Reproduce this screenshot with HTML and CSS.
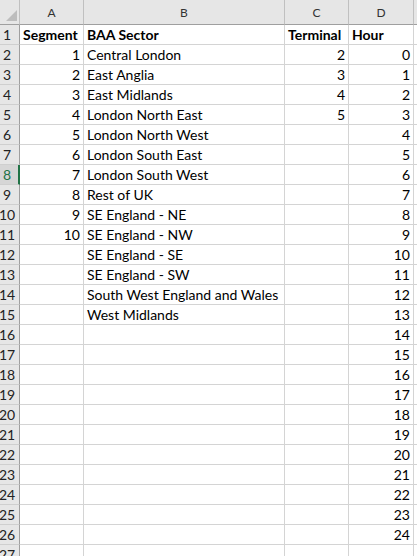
FILE: index.html
```html
<!DOCTYPE html>
<html lang="en">
<head>
    <meta charset="UTF-8">
    <meta name="viewport" content="width=device-width, initial-scale=1.0">
    <title>BAA Sector lookup</title>
    <link rel="stylesheet" href="styles.css">
</head>
<body>

    <table class="sheet">
        <colgroup>
            <col class="c-row">
            <col class="c-a">
            <col class="c-b">
            <col class="c-c">
            <col class="c-d">
            <col class="c-e">
        </colgroup>
        <tr class="col-heads">
            <th class="corner"><span class="tri"></span></th>
            <th>A</th>
            <th>B</th>
            <th>C</th>
            <th>D</th>
            <th class="last"></th>
        </tr>
        <tr class="head-row"><th><span>1</span></th><td>Segment</td><td>BAA Sector</td><td>Terminal</td><td>Hour</td><td></td></tr>
        <tr><th><span>2</span></th><td class="num">1</td><td>Central London</td><td class="num">2</td><td class="num">0</td><td></td></tr>
        <tr><th><span>3</span></th><td class="num">2</td><td>East Anglia</td><td class="num">3</td><td class="num">1</td><td></td></tr>
        <tr><th><span>4</span></th><td class="num">3</td><td>East Midlands</td><td class="num">4</td><td class="num">2</td><td></td></tr>
        <tr><th><span>5</span></th><td class="num">4</td><td>London North East</td><td class="num">5</td><td class="num">3</td><td></td></tr>
        <tr><th><span>6</span></th><td class="num">5</td><td>London North West</td><td></td><td class="num">4</td><td></td></tr>
        <tr><th><span>7</span></th><td class="num">6</td><td>London South East</td><td></td><td class="num">5</td><td></td></tr>
        <tr class="selected"><th><span>8</span></th><td class="num">7</td><td>London South West</td><td></td><td class="num">6</td><td></td></tr>
        <tr><th><span>9</span></th><td class="num">8</td><td>Rest of UK</td><td></td><td class="num">7</td><td></td></tr>
        <tr><th><span>10</span></th><td class="num">9</td><td>SE England - NE</td><td></td><td class="num">8</td><td></td></tr>
        <tr><th><span>11</span></th><td class="num">10</td><td>SE England - NW</td><td></td><td class="num">9</td><td></td></tr>
        <tr><th><span>12</span></th><td></td><td>SE England - SE</td><td></td><td class="num">10</td><td></td></tr>
        <tr><th><span>13</span></th><td></td><td>SE England - SW</td><td></td><td class="num">11</td><td></td></tr>
        <tr><th><span>14</span></th><td></td><td>South West England and Wales</td><td></td><td class="num">12</td><td></td></tr>
        <tr><th><span>15</span></th><td></td><td>West Midlands</td><td></td><td class="num">13</td><td></td></tr>
        <tr><th><span>16</span></th><td></td><td></td><td></td><td class="num">14</td><td></td></tr>
        <tr><th><span>17</span></th><td></td><td></td><td></td><td class="num">15</td><td></td></tr>
        <tr><th><span>18</span></th><td></td><td></td><td></td><td class="num">16</td><td></td></tr>
        <tr><th><span>19</span></th><td></td><td></td><td></td><td class="num">17</td><td></td></tr>
        <tr><th><span>20</span></th><td></td><td></td><td></td><td class="num">18</td><td></td></tr>
        <tr><th><span>21</span></th><td></td><td></td><td></td><td class="num">19</td><td></td></tr>
        <tr><th><span>22</span></th><td></td><td></td><td></td><td class="num">20</td><td></td></tr>
        <tr><th><span>23</span></th><td></td><td></td><td></td><td class="num">21</td><td></td></tr>
        <tr><th><span>24</span></th><td></td><td></td><td></td><td class="num">22</td><td></td></tr>
        <tr><th><span>25</span></th><td></td><td></td><td></td><td class="num">23</td><td></td></tr>
        <tr><th><span>26</span></th><td></td><td></td><td></td><td class="num">24</td><td></td></tr>
        <tr><th><span>27</span></th><td></td><td></td><td></td><td></td><td></td></tr>
    </table>

</body>
</html>
```

FILE: styles.css
```css
body {
    margin: 0;
    background-color: #fff;
    font-family: Lato, "Liberation Sans", sans-serif;
    overflow: hidden;
}

.sheet {
    table-layout: fixed;
    border-collapse: separate;
    border-spacing: 0;
    width: 417px;
    font-size: 14px;
    color: #000;
}

.c-row { width: 20px; }
.c-a   { width: 64px; }
.c-b   { width: 201px; }
.c-c   { width: 64px; }
.c-d   { width: 65px; }
.c-e   { width: 3px; }

th, td {
    box-sizing: border-box;
    padding: 0 3px 0;
    border-right: 1px solid #d4d4d4;
    border-bottom: 1px solid #d4d4d4;
    white-space: nowrap;
    overflow: hidden;
    vertical-align: bottom;
    text-align: left;
    font-weight: normal;
    line-height: 18px;
}

tr {
    height: 20px;
}

/* column letters */
.col-heads {
    height: 25px;
}

.col-heads th {
    background-color: #e6e6e6;
    border-right-color: #c0c0c0;
    border-bottom-color: #9f9f9f;
    color: #333;
    font-size: 12px;
    text-align: center;
    vertical-align: middle;
    padding: 2px 0 0;
}

.col-heads .last {
    border-right: none;
}

.corner {
    position: relative;
}

.tri {
    position: absolute;
    right: 2px;
    bottom: 3px;
    width: 0;
    height: 0;
    border-left: 11px solid transparent;
    border-bottom: 11px solid #bdbdbd;
}

/* row numbers */
tr > th {
    background-color: #e6e6e6;
    border-right-color: #9f9f9f;
    border-bottom-color: #cfcfcf;
    color: #222;
    font-size: 14px;
    padding: 0;
    overflow: visible;
}

tr > th span {
    display: block;
    width: 26px;
    margin-left: -6px;
    text-align: center;
}

.selected > th {
    background-color: #d6d6d6;
    color: #217346;
    border-right: 2px solid #217346;
}

.head-row td {
    font-weight: bold;
}

.num {
    text-align: right;
}

td:last-child {
    border-right: none;
}
```
